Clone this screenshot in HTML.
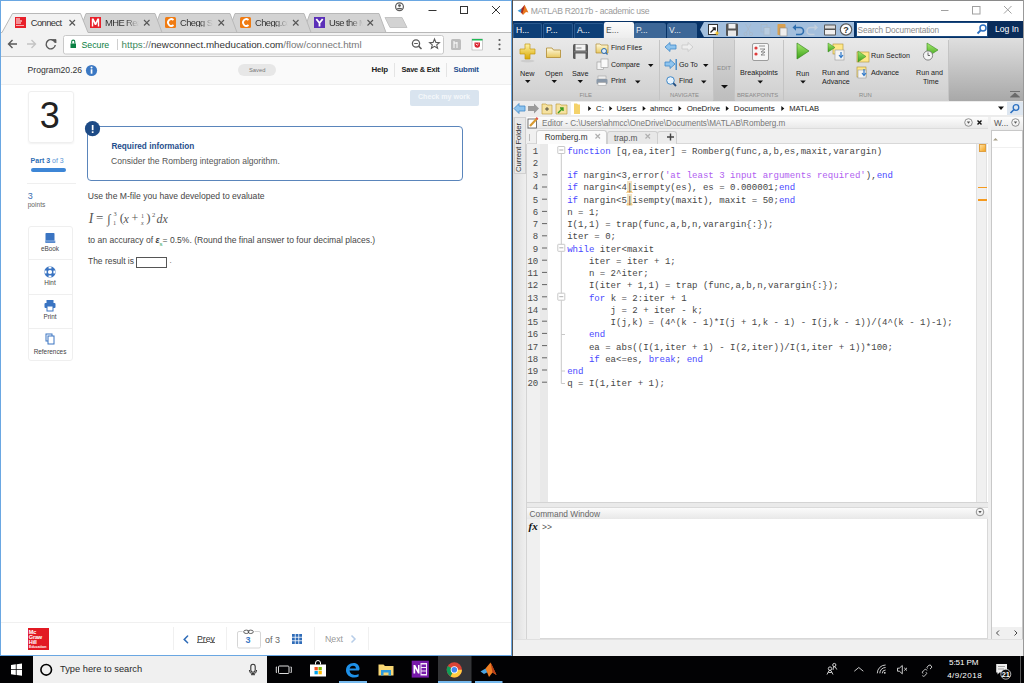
<!DOCTYPE html>
<html><head><meta charset="utf-8">
<style>
*{box-sizing:border-box}
html,body{margin:0;padding:0;width:1024px;height:683px;overflow:hidden;background:#fff;font-family:"Liberation Sans",sans-serif}
.a{position:absolute}
.t{position:absolute;white-space:nowrap;line-height:1}
.mono{font-family:"Liberation Mono",monospace}
pre.code{margin:0;font-size:9.05px;line-height:12.25px;white-space:pre}
.k{color:#4848ff}.s{color:#b060f0}
</style></head><body>
<!-- ============ CHROME ============ -->
<div id="chrome" class="a" style="left:0;top:0;width:512px;height:656px;background:#fff;overflow:hidden">
  <svg class="a" style="left:0;top:0" width="512" height="33">
    <line x1="0" y1="32.5" x2="512" y2="32.5" stroke="#c4c4c4" stroke-width="1"/>
    <path d="M386,32.5 L379,13.5 L310,13.5 L303,32.5Z" fill="#d3d3d3" stroke="#b8b8b8"/>
    <path d="M311,32.5 L304,13.5 L235,13.5 L228,32.5Z" fill="#d3d3d3" stroke="#b8b8b8"/>
    <path d="M237,32.5 L230,13.5 L160,13.5 L153,32.5Z" fill="#d3d3d3" stroke="#b8b8b8"/>
    <path d="M162,32.5 L155,13.5 L86,13.5 L79,32.5Z" fill="#d3d3d3" stroke="#b8b8b8"/>
    <path d="M0,33 L2,32.5 L12.5,13.5 L80.5,13.5 L88,32.5 L512,32.5 L512,34 L0,34Z" fill="#f2f2f2" stroke="#b8b8b8"/>
    <path d="M385,17.5 L402,17.5 L407,27.5 L390,27.5Z" fill="#d3d3d3" stroke="#c4c4c4"/>
    <!-- tab icons -->
    <rect x="15" y="17" width="11" height="11" fill="#e8202a"/>
    <g fill="#fff"><rect x="16" y="18.5" width="4" height="1"/><rect x="16" y="20.5" width="6" height="1"/><rect x="16" y="22.5" width="5" height="1"/><rect x="16" y="25" width="8" height="0.8" opacity=".8"/></g>
    <rect x="90" y="17" width="11" height="11" fill="#e8202a"/>
    <path d="M91.8,26.5 V18.5 H93.6 L95.5,22.5 L97.4,18.5 H99.2 V26.5 H97.8 V21.5 L96.2,25 H94.8 L93.2,21.5 V26.5Z" fill="#fff"/>
    <rect x="165" y="17" width="11" height="11" rx="1.5" fill="#f07b12"/>
    <path d="M173.5,20 A3.3,3.3 0 1 0 173.5,25" fill="none" stroke="#fff" stroke-width="1.8"/>
    <rect x="240" y="17" width="11" height="11" rx="1.5" fill="#f07b12"/>
    <path d="M248.5,20 A3.3,3.3 0 1 0 248.5,25" fill="none" stroke="#fff" stroke-width="1.8"/>
    <rect x="314" y="17" width="11" height="11" fill="#5b2fb8"/>
    <path d="M316.3,19 L319.5,23 V26.5 M322.7,19 L319.5,23" fill="none" stroke="#fff" stroke-width="1.8"/>
    <!-- close x's -->
    <g stroke="#555" stroke-width="1.1">
      <path d="M69.5,20 L75,25.5 M75,20 L69.5,25.5"/>
      <path d="M144,20 L149.5,25.5 M149.5,20 L144,25.5"/>
      <path d="M218.5,20 L224,25.5 M224,20 L218.5,25.5"/>
      <path d="M293,20 L298.5,25.5 M298.5,20 L293,25.5"/>
      <path d="M367.5,20 L373,25.5 M373,20 L367.5,25.5"/>
    </g>
    <!-- window controls -->
    <circle cx="399.5" cy="6.8" r="3.9" fill="none" stroke="#5a5a5a" stroke-width="1.2"/>
    <circle cx="399.5" cy="5.6" r="1.4" fill="#5a5a5a"/>
    <path d="M396.6,8.6 Q399.5,6.9 402.4,8.6 V9.3 H396.6Z" fill="#5a5a5a"/>
    <line x1="428.5" y1="10.5" x2="436.5" y2="10.5" stroke="#333" stroke-width="1"/>
    <rect x="460.5" y="6.5" width="7" height="7" fill="none" stroke="#333" stroke-width="1"/>
    <path d="M492,6 L500,14 M500,6 L492,14" stroke="#333" stroke-width="1"/>
  </svg>
  <!-- tab titles -->
  <div class="t" style="left:30.8px;top:18px;font-size:9.4px;letter-spacing:-.6px;color:#333">Connect</div>
  <div class="t" style="left:105px;top:18px;font-size:9.4px;letter-spacing:-.6px;color:#333;width:34px;overflow:hidden;-webkit-mask-image:linear-gradient(90deg,#000 60%,transparent)">MHE Rea</div>
  <div class="t" style="left:180px;top:18px;font-size:9.4px;letter-spacing:-.6px;color:#333;width:33px;overflow:hidden;-webkit-mask-image:linear-gradient(90deg,#000 60%,transparent)">Chegg St</div>
  <div class="t" style="left:255px;top:18px;font-size:9.4px;letter-spacing:-.6px;color:#333;width:33px;overflow:hidden;-webkit-mask-image:linear-gradient(90deg,#000 60%,transparent)">Chegg.com</div>
  <div class="t" style="left:329px;top:18px;font-size:9.4px;letter-spacing:-.6px;color:#333;width:34px;overflow:hidden;-webkit-mask-image:linear-gradient(90deg,#000 60%,transparent)">Use the M</div>
  <!-- toolbar -->
  <div class="a" style="left:0;top:33px;width:512px;height:24px;background:#f2f2f2;border-bottom:1px solid #cacaca"></div>
  <svg class="a" style="left:0;top:33px" width="512" height="24">
    <path d="M17,11 H9 M12.5,7 L8.5,11 L12.5,15" fill="none" stroke="#5a5a5a" stroke-width="1.4"/>
    <path d="M27,11 H35 M31.5,7 L35.5,11 L31.5,15" fill="none" stroke="#c4c4c4" stroke-width="1.4"/>
    <path d="M55,9.5 A4.6,4.6 0 1 0 55.3,12" fill="none" stroke="#5a5a5a" stroke-width="1.4"/>
    <path d="M52.5,6.5 L56,6.5 L56,10 Z" fill="#5a5a5a" stroke="#5a5a5a" stroke-width="0.8"/>
    <!-- omnibox -->
    <rect x="63.5" y="2.5" width="380" height="18.5" rx="2" fill="#fff" stroke="#c9c9c9"/>
    <rect x="70.5" y="10.5" width="5.5" height="4.5" fill="#0b8043"/>
    <path d="M71.7,10.5 V8.7 A1.55,1.55 0 0 1 74.8,8.7 V10.5" fill="none" stroke="#0b8043" stroke-width="1.1"/>
    <line x1="117.5" y1="6" x2="117.5" y2="17" stroke="#cfcfcf"/>
    <!-- zoom -->
    <circle cx="416" cy="10.5" r="3.6" fill="none" stroke="#5a5a5a" stroke-width="1.3"/>
    <path d="M418.6,13.1 L421.5,16" stroke="#5a5a5a" stroke-width="1.5"/>
    <line x1="414.2" y1="10.5" x2="417.8" y2="10.5" stroke="#5a5a5a" stroke-width="1"/>
    <!-- star -->
    <path d="M434.5,6 L435.9,9.4 L439.4,9.6 L436.7,11.9 L437.6,15.3 L434.5,13.4 L431.4,15.3 L432.3,11.9 L429.6,9.6 L433.1,9.4Z" fill="none" stroke="#5a5a5a" stroke-width="1.1"/>
    <!-- ext -->
    <rect x="451" y="6" width="10" height="11" rx="1.5" fill="#bdbdbd"/>
    <path d="M454,8 V15 M454,10 H457 M457,9 V15" stroke="#fff" stroke-width="1"/>
    <rect x="472" y="6" width="10.5" height="11" fill="#fff" stroke="#aaa" stroke-width=".6"/>
    <rect x="472" y="6" width="10.5" height="1.5" fill="#1db954"/>
    <path d="M474.5,9.5 H480 V12 A2.75,2.75 0 0 1 474.5,12Z" fill="#d9242f"/>
    <path d="M475.8,10.8 L477.25,12.2 L478.7,10.8" stroke="#fff" stroke-width=".9" fill="none"/>
    <circle cx="499.5" cy="7" r="1.1" fill="#5a5a5a"/><circle cx="499.5" cy="11.5" r="1.1" fill="#5a5a5a"/><circle cx="499.5" cy="16" r="1.1" fill="#5a5a5a"/>
  </svg>
  <div class="t" style="left:81.5px;top:40.5px;font-size:8.75px;color:#0b8043">Secure</div>
  <div class="t" style="left:121.5px;top:39.5px;font-size:9.8px;color:#333"><span style="color:#3c8a5c">https</span><span style="color:#777">://</span>newconnect.mheducation.com<span style="color:#777">/flow/connect.html</span></div>

  <!-- page header -->
  <div class="a" style="left:0;top:57px;width:512px;height:28px;background:#fafafa;border-bottom:1px solid #efefef"></div>
  <div class="t" style="left:27.5px;top:65.6px;font-size:8.65px;color:#333">Program20.26</div>
  <svg class="a" style="left:85px;top:64px" width="13" height="13"><circle cx="6.5" cy="6.5" r="5.6" fill="#3b78c3"/><rect x="5.7" y="5.3" width="1.7" height="4.4" fill="#fff"/><circle cx="6.55" cy="3.6" r="1" fill="#fff"/></svg>
  <div class="a" style="left:237.5px;top:63.8px;width:38px;height:12.5px;border-radius:6.25px;background:#e7e7e7"></div>
  <div class="t" style="left:249px;top:67.5px;font-size:5.8px;color:#777">Saved</div>
  <div class="t" style="left:371.5px;top:66.3px;font-size:7.9px;color:#222;font-weight:bold;letter-spacing:-.2px">Help</div>
  <div class="a" style="left:394px;top:63px;width:1px;height:14px;background:#e4e4e4"></div>
  <div class="t" style="left:401.5px;top:66.3px;font-size:7.4px;color:#222;font-weight:bold;letter-spacing:-.2px">Save &amp; Exit</div>
  <div class="a" style="left:446px;top:63px;width:1px;height:14px;background:#e4e4e4"></div>
  <div class="t" style="left:453.5px;top:66.3px;font-size:7.8px;color:#1f4f8f;font-weight:bold;letter-spacing:-.2px">Submit</div>
  <!-- check my work -->
  <div class="a" style="left:410px;top:89.5px;width:69px;height:16px;border-radius:2px;background:#d9e4ef"></div>
  <div class="t" style="left:418px;top:94px;font-size:7.1px;color:#f4f7fa;font-weight:bold">Check my work</div>

  <!-- question number box -->
  <div class="a" style="left:27.5px;top:90.5px;width:46px;height:52px;border:1px solid #efefef;border-radius:3px;box-shadow:0 1px 2px rgba(0,0,0,.06)"></div>
  <div class="t" style="left:39.8px;top:97.8px;font-size:36px;color:#222;font-weight:normal">3</div>
  <div class="t" style="left:30.6px;top:156.8px;font-size:7px;color:#2e6db4"><b>Part 3</b> <span style="color:#5a95d6">of 3</span></div>
  <div class="a" style="left:30.5px;top:168px;width:35.5px;height:3.5px;border-radius:2px;background:#3d86d6"></div>
  <div class="a" style="left:27px;top:183px;width:49px;height:1px;background:#efefef"></div>
  <div class="t" style="left:27.7px;top:191.5px;font-size:9px;color:#3c6fb0">3</div>
  <div class="t" style="left:27.7px;top:201.8px;font-size:6.6px;color:#666">points</div>

  <!-- tools -->
  <div class="a" style="left:27.7px;top:225.7px;width:45px;height:135.5px;border:1px solid #efefef;border-radius:3px"></div>
  <div class="a" style="left:28px;top:259px;width:44px;height:1px;background:#efefef"></div>
  <div class="a" style="left:28px;top:293.5px;width:44px;height:1px;background:#efefef"></div>
  <div class="a" style="left:28px;top:327.5px;width:44px;height:1px;background:#efefef"></div>
  <svg class="a" style="left:28px;top:226px" width="45" height="135">
    <!-- ebook -->
    <rect x="17.5" y="7" width="9" height="9.5" rx=".8" fill="#3a74c2"/>
    <rect x="17.5" y="14.5" width="10" height="2.5" fill="#9fbde6"/>
    <rect x="17.5" y="15.5" width="9.5" height="1.2" fill="#3a74c2"/>
    <!-- hint lifebuoy -->
    <circle cx="22" cy="46" r="5.7" fill="#3a74c2"/>
    <circle cx="22" cy="46" r="2.1" fill="#fff"/>
    <rect x="20.6" y="40.6" width="2.8" height="2" fill="#fff"/><rect x="20.6" y="49.4" width="2.8" height="2" fill="#fff"/>
    <rect x="16.6" y="44.6" width="2" height="2.8" fill="#fff"/><rect x="25.4" y="44.6" width="2" height="2.8" fill="#fff"/>
    <!-- print -->
    <rect x="18.5" y="74" width="7" height="3" fill="#3a74c2"/>
    <rect x="16.5" y="77" width="11" height="5" rx="1" fill="#3a74c2"/>
    <rect x="19" y="80" width="6" height="5" fill="#fff" stroke="#3a74c2" stroke-width="1"/>
    <!-- references -->
    <rect x="18" y="108" width="6" height="7" fill="#fff" stroke="#3a74c2" stroke-width="1"/>
    <rect x="20" y="110" width="6" height="8" fill="#fff" stroke="#3a74c2" stroke-width="1"/>
  </svg>
  <div class="t" style="left:28px;width:44px;text-align:center;top:246px;font-size:6.4px;color:#444">eBook</div>
  <div class="t" style="left:28px;width:44px;text-align:center;top:280px;font-size:6.4px;color:#444">Hint</div>
  <div class="t" style="left:28px;width:44px;text-align:center;top:314px;font-size:6.4px;color:#444">Print</div>
  <div class="t" style="left:28px;width:44px;text-align:center;top:348.5px;font-size:6.4px;color:#444">References</div>

  <!-- card -->
  <div class="a" style="left:87px;top:126px;width:376px;height:54.5px;border:1px solid #5a85bb;border-radius:4px"></div>
  <svg class="a" style="left:84px;top:121px" width="18" height="18"><circle cx="8.5" cy="7.7" r="7.6" fill="#1d4b86"/><rect x="7.8" y="4" width="1.7" height="5.2" fill="#fff"/><rect x="7.8" y="10.3" width="1.7" height="1.7" fill="#fff"/></svg>
  <div class="t" style="left:111.4px;top:143.2px;font-size:8.2px;color:#1f4e8c;font-weight:bold">Required information</div>
  <div class="t" style="left:111px;top:157.4px;font-size:8.58px;color:#555">Consider the Romberg integration algorithm.</div>

  <!-- body -->
  <div class="t" style="left:87.8px;top:191.5px;font-size:8.6px;color:#464646">Use the M-file you have developed to evaluate</div>
  <svg class="a" style="left:80px;top:205px" width="100" height="25" font-family="Liberation Serif" fill="#555">
    <text x="8.8" y="17.5" font-size="13.6" font-style="italic">I</text>
    <text x="16" y="17" font-size="13">=</text>
    <text x="27.3" y="17.6" font-size="12.5">&#8747;</text>
    <text x="33.4" y="11.4" font-size="6.3">3</text>
    <text x="33" y="20" font-size="6.3">1</text>
    <text x="39.8" y="17" font-size="12.8">(</text>
    <text x="43.6" y="17.6" font-size="12" font-style="italic">x</text>
    <text x="51.6" y="17" font-size="12">+</text>
    <text x="61" y="13.4" font-size="6">1</text>
    <text x="61" y="20" font-size="6" font-style="italic">x</text>
    <text x="66.3" y="17" font-size="12.8">)</text>
    <text x="72" y="11.6" font-size="6.6">2</text>
    <text x="76.6" y="17.6" font-size="12" font-style="italic">dx</text>
  </svg>
  <div class="t" style="left:88px;top:236px;font-size:8.55px;color:#464646">to an accuracy of <b><i>&epsilon;</i></b><sub style="font-size:6px;color:#3a6">s</sub>= 0.5%. (Round the final answer to four decimal places.)</div>
  <div class="t" style="left:88px;top:256.8px;font-size:8.45px;color:#464646">The result is</div>
  <div class="a" style="left:136px;top:257px;width:31px;height:10.5px;border:1px solid #555;background:#fff"></div>
  <div class="t" style="left:169.5px;top:257px;font-size:8px;color:#555">.</div>

  <!-- footer -->
  <div class="a" style="left:0;top:622px;width:512px;height:1px;background:#f0f0f0"></div>
  <div class="a" style="left:27.6px;top:628.2px;width:21.8px;height:21.7px;background:#e21a23"></div>
  <div class="t" style="left:28.8px;top:629.8px;font-size:5.6px;line-height:4.9px;color:#fff;font-weight:bold;white-space:pre;letter-spacing:-.2px">Mc
Graw
Hill</div>
  <div class="t" style="left:29px;top:646.4px;font-size:3.6px;color:#fff;font-weight:bold">Education</div>
  <div class="a" style="left:173px;top:627px;width:1px;height:23px;background:#f0f0f0"></div>
  <div class="a" style="left:225.5px;top:627px;width:1px;height:23px;background:#f0f0f0"></div>
  <div class="a" style="left:314px;top:627px;width:1px;height:23px;background:#f0f0f0"></div>
  <div class="a" style="left:367.5px;top:627px;width:1px;height:23px;background:#f0f0f0"></div>
  <svg class="a" style="left:170px;top:622px" width="200" height="34">
    <path d="M17.6,14 L14.2,17.4 L17.6,20.8" fill="none" stroke="#2f6cb8" stroke-width="1.5" stroke-linecap="round"/>
    <rect x="67.5" y="9.5" width="23" height="16.5" rx="1.5" fill="#fff" stroke="#d6d6d6"/>
    <rect x="72.5" y="8" width="12" height="3" fill="#fff"/><ellipse cx="76.3" cy="9.8" rx="2.6" ry="1.7" fill="none" stroke="#444" stroke-width=".85"/><ellipse cx="80.7" cy="9.8" rx="2.6" ry="1.7" fill="none" stroke="#444" stroke-width=".85"/>
    <g fill="#2f6cb8"><rect x="122" y="12" width="2.8" height="2.8"/><rect x="125.6" y="12" width="2.8" height="2.8"/><rect x="129.2" y="12" width="2.8" height="2.8"/><rect x="122" y="15.6" width="2.8" height="2.8"/><rect x="125.6" y="15.6" width="2.8" height="2.8"/><rect x="129.2" y="15.6" width="2.8" height="2.8"/><rect x="122" y="19.2" width="2.8" height="2.8"/><rect x="125.6" y="19.2" width="2.8" height="2.8"/><rect x="129.2" y="19.2" width="2.8" height="2.8"/></g>
    <path d="M181.5,13.5 L185,17 L181.5,20.5" fill="none" stroke="#b7cde8" stroke-width="1.5"/>
  </svg>
  <div class="t" style="left:197px;top:634.5px;font-size:8.75px;color:#333;text-decoration:underline;text-decoration-thickness:.7px;text-underline-offset:.3px;text-decoration-color:#666">Prev</div>
  <div class="t" style="left:245.5px;top:635.5px;font-size:9px;color:#3a78c4;font-weight:bold">3</div>
  <div class="t" style="left:265px;top:635.8px;font-size:9px;color:#666">of 3</div>
  <div class="t" style="left:325px;top:634.5px;font-size:8.75px;color:#999;text-decoration:underline;text-decoration-thickness:.7px;text-underline-offset:.3px;text-decoration-color:#aaa">Next</div>
</div>
<!-- chrome border -->
<div class="a" style="left:0;top:0;width:512px;height:656px;border:1px solid #6aa7e2;pointer-events:none"></div>

<!-- ============ MATLAB ============ -->
<div id="matlab" class="a" style="left:512px;top:0;width:512px;height:656px;background:#f0f0f0;overflow:hidden">
  <!-- title bar -->
  <div class="a" style="left:0;top:0;width:512px;height:21px;background:#fff;border-top:1px solid #8a8a8a"></div>
  <svg class="a" style="left:5px;top:4px" width="13" height="13">
    <path d="M0.6,6.8 L4.6,4.4 L6.4,6.4 L4,8.8Z" fill="#3f9ad8"/>
    <path d="M4.6,4.4 L7.6,0.8 L8.2,4 L6,10.8 L4,8.8Z" fill="#a8281c"/>
    <path d="M7.6,0.8 L11.4,8.6 L9,8 L6.2,10.8 L5.4,9.6 L7.2,4Z" fill="#e97a20"/>
  </svg>
  <div class="t" style="left:18.7px;top:7.3px;font-size:8.6px;color:#9a9a9a;letter-spacing:-.3px">MATLAB R2017b - academic use</div>
  <svg class="a" style="left:420px;top:0" width="92" height="21">
    <line x1="9" y1="10.5" x2="16.5" y2="10.5" stroke="#a0a0a0"/>
    <rect x="40.5" y="6.5" width="7.5" height="7.5" fill="none" stroke="#a0a0a0"/>
    <path d="M72,6 L79.5,13.5 M79.5,6 L72,13.5" stroke="#a0a0a0"/>
  </svg>

  <!-- tab strip -->
  <div class="a" style="left:0;top:21px;width:512px;height:17px;background:#073266"></div>
  <div class="a" style="left:1px;top:22.5px;width:29px;height:15.5px;background:#0d3f77;border:1px solid #2a5a90;border-bottom:0;border-radius:2px 2px 0 0"></div>
  <div class="a" style="left:31px;top:22.5px;width:30px;height:15.5px;background:#0d3f77;border:1px solid #2a5a90;border-bottom:0;border-radius:2px 2px 0 0"></div>
  <div class="a" style="left:62px;top:22.5px;width:30px;height:15.5px;background:#0d3f77;border:1px solid #2a5a90;border-bottom:0;border-radius:2px 2px 0 0"></div>
  <div class="a" style="left:92px;top:22px;width:30px;height:17px;background:linear-gradient(#fbfbfb,#ececec);border-radius:2px 2px 0 0"></div>
  <div class="a" style="left:122px;top:22.5px;width:32px;height:15.5px;background:#3d6797;border-radius:2px 2px 0 0"></div>
  <div class="a" style="left:155px;top:22.5px;width:30px;height:15.5px;background:#3d6797;border-radius:2px 2px 0 0"></div>
  <div class="t" style="left:4px;top:26px;font-size:8.5px;color:#fff">H...</div>
  <div class="t" style="left:34px;top:26px;font-size:8.5px;color:#fff">P...</div>
  <div class="t" style="left:65px;top:26px;font-size:8.5px;color:#fff">A...</div>
  <div class="t" style="left:94px;top:26px;font-size:8.5px;color:#555">E...</div>
  <div class="t" style="left:124px;top:26px;font-size:8.5px;color:#e8eef5">P...</div>
  <div class="t" style="left:157px;top:26px;font-size:8.5px;color:#e8eef5">V...</div>
  <!-- quick access -->
  <svg class="a" style="left:185px;top:21px" width="160" height="17">
    <path d="M7,1 L157,1 L157,16 L7,16 L3,8.5Z" fill="#a3bfdd"/>
    <!-- icons -->
    <rect x="11.5" y="3.5" width="9" height="10" fill="#fff" stroke="#333" stroke-width="1"/>
    <path d="M13.5,11.5 L18,7 M15.5,6.8 H18.2 V9.5" stroke="#222" stroke-width="1.3" fill="none"/>
    <path d="M20,9.5 L21,11.5 L23,12 L21,12.8 L20,15 L19,12.8 L17,12 L19,11.5Z" fill="#f4c430"/>
    <rect x="29" y="2.5" width="12" height="12.5" rx="1.2" fill="#555"/><rect x="31.5" y="3" width="7" height="4.5" fill="#f0f0f0"/><rect x="31" y="9.5" width="8" height="5.5" fill="#e8e8e8"/>
    <path d="M48.5,3 L53.5,12 M54,3 L49,12" stroke="#a8b8c8" stroke-width=".8" fill="none"/><circle cx="48.5" cy="13" r="1.6" fill="none" stroke="#a8b8c8" stroke-width=".8"/><circle cx="54" cy="13" r="1.6" fill="none" stroke="#a8b8c8" stroke-width=".8"/>
    <rect x="64" y="3.5" width="6" height="7.5" fill="none" stroke="#a8b8c8" stroke-width=".8"/><rect x="67" y="6.5" width="6" height="7.5" fill="#b8cce0" stroke="#a8b8c8" stroke-width=".8"/>
    <rect x="80.5" y="3" width="8" height="11" rx=".8" fill="#d8a050"/><rect x="83" y="7" width="7" height="8" fill="#eee" stroke="#888" stroke-width=".6"/>
    <path d="M97.5,6.5 H103 A3.5,3.5 0 0 1 103,13.5 H99" fill="none" stroke="#2f6faf" stroke-width="1.6"/><path d="M95.5,6.5 L99,3.3 V9.7Z" fill="#2f6faf"/>
    <path d="M119,6.5 H113.5 A3.5,3.5 0 0 0 113.5,13.5 H117.5" fill="none" stroke="#c3cfdc" stroke-width="1.6"/><path d="M121,6.5 L117.5,3.3 V9.7Z" fill="#c3cfdc"/>
    <rect x="127" y="3.5" width="12" height="11" rx="1" fill="#555"/><rect x="128" y="4.5" width="10" height="3" fill="#ddd"/><rect x="128" y="9" width="10" height="4.5" fill="#f0f0f0"/>
    <circle cx="149" cy="8.5" r="6.2" fill="#555"/><circle cx="149" cy="8.5" r="5.1" fill="#fff"/>
    <text x="149" y="12" font-family="Liberation Sans" font-size="9" font-weight="bold" text-anchor="middle" fill="#333">?</text>
  </svg>
  <!-- search -->
  <div class="a" style="left:344px;top:22px;width:132px;height:14.5px;background:#fff;border:1px solid #1a4a80"></div>
  <div class="t" style="left:345.6px;top:25.6px;font-size:8.3px;color:#8a8a8a;letter-spacing:-.15px">Search Documentation</div>
  <svg class="a" style="left:464px;top:23px" width="12" height="12"><circle cx="7" cy="5" r="3" fill="none" stroke="#2a6fc0" stroke-width="1.5"/><path d="M5,7 L1.5,10.5" stroke="#2a6fc0" stroke-width="1.8"/></svg>
  <div class="a" style="left:476px;top:21px;width:36px;height:17px;background:#092c5a"></div>
  <div class="t" style="left:483px;top:25px;font-size:8.6px;color:#fff">Log In</div>

  <!-- ribbon -->
  <div class="a" style="left:0;top:38px;width:512px;height:51.5px;background:linear-gradient(#e9e9e9,#d3d3d3)"></div>
  <div class="a" style="left:0;top:89.5px;width:512px;height:11px;background:linear-gradient(#d6d6d6,#cdcdcd)"></div>
  <div class="a" style="left:201px;top:38px;width:21.5px;height:62.5px;background:linear-gradient(#d8d8d8,#bdbdbd)"></div>
  <div class="a" style="left:436.5px;top:38px;width:76px;height:62.5px;background:linear-gradient(#dfdfdf,#a8a8a8)"></div>
  <div class="a" style="left:147px;top:40px;width:1px;height:60px;background:#c4c4c4"></div>
  <div class="a" style="left:200.5px;top:40px;width:1px;height:60px;background:#c4c4c4"></div>
  <div class="a" style="left:222px;top:40px;width:1px;height:60px;background:#c4c4c4"></div>
  <div class="a" style="left:270.5px;top:40px;width:1px;height:60px;background:#c4c4c4"></div>
  <div class="a" style="left:436px;top:40px;width:1px;height:60px;background:#c4c4c4"></div>
  <div class="a" style="left:0;top:100.5px;width:512px;height:1px;background:#bdbdbd"></div>
  <svg class="a" style="left:0;top:38px" width="512" height="63">
    <defs>
      <linearGradient id="gy" x1="0" y1="0" x2="0" y2="1"><stop offset="0" stop-color="#fff3a8"/><stop offset="1" stop-color="#d9a800"/></linearGradient>
      <linearGradient id="gf" x1="0" y1="0" x2="0" y2="1"><stop offset="0" stop-color="#fffbe0"/><stop offset="1" stop-color="#e8c860"/></linearGradient>
      <linearGradient id="gg" x1="0" y1="0" x2="0" y2="1"><stop offset="0" stop-color="#a8ec70"/><stop offset="1" stop-color="#3aa018"/></linearGradient>
    </defs>
    <!-- New -->
    <path d="M13,6 H18 V11 H23 V16 H18 V21 H13 V16 H8 V11 H13Z" fill="url(#gy)" stroke="#c49a10" stroke-width=".7"/>
    <ellipse cx="15.5" cy="23" rx="7" ry="1.5" fill="#000" opacity=".08"/>
    <!-- Open -->
    <path d="M34.5,10 H40 L41.5,12 H48.5 V19.5 H34.5Z" fill="url(#gf)" stroke="#b08a30" stroke-width=".8"/>
    <!-- Save -->
    <rect x="61" y="6" width="15" height="15" rx="1.5" fill="#5a5a5a"/>
    <rect x="63.5" y="6.5" width="10" height="6" fill="#f4f4f4"/>
    <rect x="64.5" y="9.5" width="5" height="1" fill="#888"/>
    <rect x="63.5" y="15.5" width="10" height="5.5" fill="#e4e4e4"/>
    <rect x="62" y="13" width="13" height="1.5" fill="#777"/>
    <!-- find files -->
    <path d="M84,6 H88 L89,7 H96 V15 H84Z" fill="url(#gf)" stroke="#b08a30" stroke-width=".7"/>
    <circle cx="92" cy="13" r="2.5" fill="#dfeefc" stroke="#2a6ab0" stroke-width="1"/><path d="M93.7,14.7 L95.5,16.5" stroke="#2a6ab0" stroke-width="1.2"/>
    <!-- compare -->
    <rect x="85" y="24" width="6.5" height="7.5" fill="#f4f4f4" stroke="#999" stroke-width=".6"/>
    <rect x="89" y="21" width="7" height="8.5" fill="#fafafa" stroke="#999" stroke-width=".6"/>
    <!-- print -->
    <rect x="86" y="38" width="8" height="3" fill="#eee" stroke="#999" stroke-width=".5"/>
    <rect x="84.5" y="41" width="11" height="5" rx="1" fill="#8a98a8"/>
    <rect x="86" y="44.5" width="8" height="3" fill="#fafafa" stroke="#999" stroke-width=".5"/>
    <!-- triangles -->
    <g fill="#111">
      <path d="M13,42 H18.5 L15.75,45Z"/><path d="M39.5,42 H45 L42.25,45Z"/><path d="M65.5,42 H71 L68.25,45Z"/>
      <path d="M136,26 H141.5 L138.75,29Z"/><path d="M123,42.5 H128.5 L125.75,45.5Z"/>
      <path d="M191,26 H196.5 L193.75,29Z"/><path d="M189,42.5 H194.5 L191.75,45.5Z"/>
      <path d="M209,47 H216 L212.5,50.5Z"/>
      <path d="M245.5,42.5 H251 L248.25,45.5Z"/>
      <path d="M288.25,42.5 H293.75 L291,45.5Z"/>
    </g>
    <!-- nav arrows -->
    <path d="M153,9 L158,4.5 V7 H164 V11 H158 V13.5Z" fill="#8ec4ee" stroke="#3f88c8" stroke-width=".8"/>
    <path d="M181,9 L176,4.5 V7 H170 V11 H176 V13.5Z" fill="#eee" stroke="#c8c8c8" stroke-width=".8"/>
    <path d="M163,26 L158,21.5 V24 H153 V28 H158 V30.5Z" fill="#8ec4ee" stroke="#3f88c8" stroke-width=".8"/>
    <rect x="163.5" y="21" width="1.4" height="11" fill="#3f88c8"/>
    <circle cx="158.5" cy="42.5" r="3.8" fill="#e8f3fc" stroke="#3f88c8" stroke-width="1"/><path d="M161.2,45.2 L164,48" stroke="#234e80" stroke-width="1.8"/>
    <!-- breakpoints -->
    <rect x="240.5" y="5.5" width="16" height="17" rx="1.5" fill="#f6f6f6" stroke="#888" stroke-width=".8"/>
    <circle cx="244" cy="10" r="1.6" fill="#e03a3a"/><circle cx="244" cy="16" r="1.6" fill="#e03a3a"/>
    <path d="M247,8 H253 M248,11 H253 L249,14 H253 L249,17 H253" stroke="#666" stroke-width=".7" fill="none"/>
    <!-- run -->
    <path d="M285,5 L297,13 L285,21Z" fill="url(#gg)" stroke="#3a8a20" stroke-width=".7"/>
    <!-- run and advance -->
    <rect x="321" y="6" width="10" height="10" fill="#ffe88a" stroke="#b09030" stroke-width=".6"/>
    <rect x="323" y="12" width="9" height="10" fill="#f4f4f4" stroke="#999" stroke-width=".6"/>
    <path d="M316,5 L323,9.5 L316,14Z" fill="url(#gg)" stroke="#3a8a20" stroke-width=".5"/>
    <path d="M329,14 V19 M327,17 L329,19.5 L331,17" stroke="#2f78c8" stroke-width="1.2" fill="none"/>
    <!-- run section -->
    <rect x="345" y="14" width="12" height="10" fill="#ffe88a" stroke="#b09030" stroke-width=".6"/>
    <path d="M346,13 L354,18.5 L346,24Z" fill="url(#gg)" stroke="#3a8a20" stroke-width=".5"/>
    <!-- advance -->
    <rect x="345" y="29" width="9" height="10" fill="#ffe88a" stroke="#b09030" stroke-width=".6"/>
    <rect x="346" y="32" width="8" height="8" fill="#f4f4f4" stroke="#999" stroke-width=".6"/>
    <path d="M352,31 V37 M350,35 L352,37.5 L354,35" stroke="#2f78c8" stroke-width="1.2" fill="none"/>
    <!-- run and time -->
    <path d="M415,5 L426,12 L415,19Z" fill="url(#gg)" stroke="#3a8a20" stroke-width=".6"/>
    <circle cx="416" cy="17.5" r="4.6" fill="#f4f4f4" stroke="#777" stroke-width=".9"/>
    <path d="M416,14.5 V17.5 H418" stroke="#333" stroke-width=".7" fill="none"/>
    <!-- collapse -->
    <path d="M498,53.5 H508 M498.5,59 L503,55 L507.5,59Z" stroke="#6a6a6a" fill="#6a6a6a" stroke-width=".9"/>
  </svg>
  <div class="t" style="left:8px;top:69.5px;font-size:7.25px;color:#222">New</div>
  <div class="t" style="left:33px;top:69.5px;font-size:7.25px;color:#222">Open</div>
  <div class="t" style="left:60px;top:69.5px;font-size:7.25px;color:#222">Save</div>
  <div class="t" style="left:99px;top:45.2px;font-size:7.15px;color:#222">Find Files</div>
  <div class="t" style="left:99px;top:60.8px;font-size:7.05px;color:#222">Compare</div>
  <div class="t" style="left:99px;top:77.3px;font-size:7.2px;color:#222">Print</div>
  <div class="t" style="left:167px;top:61.8px;font-size:7.1px;color:#222">Go To</div>
  <div class="t" style="left:167px;top:78.2px;font-size:7.1px;color:#222">Find</div>
  <div class="t" style="left:205px;top:65px;font-size:6.2px;color:#8a8a8a">EDIT</div>
  <div class="t" style="left:228px;top:69px;font-size:7.2px;color:#222">Breakpoints</div>
  <div class="t" style="left:284px;top:70px;font-size:7.2px;color:#222">Run</div>
  <div class="t" style="left:310px;top:70px;font-size:7.15px;color:#222">Run and</div>
  <div class="t" style="left:310px;top:78.5px;font-size:7.15px;color:#222">Advance</div>
  <div class="t" style="left:359px;top:52.8px;font-size:7.15px;color:#222">Run Section</div>
  <div class="t" style="left:359px;top:69.3px;font-size:7.2px;color:#222">Advance</div>
  <div class="t" style="left:404px;top:70px;font-size:7.15px;color:#222">Run and</div>
  <div class="t" style="left:411px;top:78.5px;font-size:7.15px;color:#222">Time</div>
  <div class="t" style="left:67.5px;top:93px;font-size:5.9px;color:#8a8a8a">FILE</div>
  <div class="t" style="left:158px;top:93px;font-size:5.9px;color:#8a8a8a">NAVIGATE</div>
  <div class="t" style="left:225px;top:93px;font-size:5.8px;color:#8a8a8a">BREAKPOINTS</div>
  <div class="t" style="left:347px;top:93px;font-size:5.9px;color:#8a8a8a">RUN</div>

  <!-- path bar -->
  <div class="a" style="left:0;top:101px;width:512px;height:15.5px;background:#ececec"></div>
  <div class="a" style="left:58.5px;top:101.5px;width:436px;height:13.5px;background:#fff"></div>
  <div class="a" style="left:494.5px;top:101.5px;width:16px;height:13.5px;background:#dde6f0"></div>
  <svg class="a" style="left:0;top:101px" width="512" height="16">
    <path d="M2,7.5 L7,2.5 V5 H13 V10 H7 V12.5Z" fill="#8ec4ee" stroke="#3f88c8" stroke-width=".8"/>
    <path d="M27,7.5 L22,2.5 V5 H16 V10 H22 V12.5Z" fill="#9a9a9a"/>
    <path d="M30,3 H34 L35,4 H40 V13 H30Z" fill="#f6e2a0" stroke="#b8962e" stroke-width=".6"/><path d="M33,8 H37 M35,6 V10" stroke="#333" stroke-width=".8"/>
    <path d="M44,3 H48 L49,4 H55 V13 H44Z" fill="#f6e2a0" stroke="#b8962e" stroke-width=".6"/><path d="M46,12 L51,7 M48,7 H51 V10" stroke="#3a9a20" stroke-width="1.4" fill="none"/>
    <path d="M62,2.5 H65 L66,3.5 H68 V13 H62Z" fill="#f4d26a"/>
    <g fill="#111"><path d="M76.2,5 L79.2,7.5 L76.2,10Z"/><path d="M97.3,5 L100.3,7.5 L97.3,10Z"/><path d="M130.7,5 L133.7,7.5 L130.7,10Z"/><path d="M166.5,5 L169.5,7.5 L166.5,10Z"/><path d="M213.9,5 L216.9,7.5 L213.9,10Z"/><path d="M269.3,5 L272.3,7.5 L269.3,10Z"/>
    <path d="M486,5.5 H492 L489,9Z"/></g>
    <circle cx="504" cy="6.5" r="2.8" fill="none" stroke="#2a6fc0" stroke-width="1.3"/><path d="M502,8.5 L498.5,12" stroke="#2a6fc0" stroke-width="1.6"/>
  </svg>
  <div class="t" style="left:84px;top:104.5px;font-size:7.8px;color:#222">C:</div>
  <div class="t" style="left:104.5px;top:104.5px;font-size:7.65px;color:#222">Users</div>
  <div class="t" style="left:138px;top:104.5px;font-size:7.65px;color:#222">ahmcc</div>
  <div class="t" style="left:174.7px;top:104.5px;font-size:7.9px;color:#222">OneDrive</div>
  <div class="t" style="left:221.8px;top:104.5px;font-size:8.1px;color:#222">Documents</div>
  <div class="t" style="left:277.2px;top:104.5px;font-size:7.6px;color:#222">MATLAB</div>

  <!-- left sidebar -->
  <div class="a" style="left:0;top:116.5px;width:15px;height:523px;background:linear-gradient(90deg,#dcdcdc,#f0f0f0)"></div>
  <div class="a" style="left:2px;top:116.5px;width:12px;height:57px;background:#e8e8e8;border:1px solid #d0d0d0"></div>
  <div class="t" style="left:3px;top:172px;font-size:7.6px;color:#333;transform-origin:0 0;transform:rotate(-90deg)">Current Folder</div>

  <!-- editor -->
  <div class="a" style="left:14.5px;top:116.5px;width:461.5px;height:12.5px;background:linear-gradient(#fdfdfd,#e9e9e9);border-bottom:1px solid #dcdcdc"></div>
  <svg class="a" style="left:15px;top:117px" width="12" height="12">
    <rect x="1" y="2" width="8.5" height="9" fill="#fff" stroke="#555" stroke-width=".8"/>
    <path d="M3,9 L10,1.5" stroke="#d89a30" stroke-width="2.2"/><path d="M9.4,2.1 L10.6,0.9" stroke="#e05050" stroke-width="2.2"/>
  </svg>
  <div class="t" style="left:30px;top:120px;font-size:8.15px;color:#777;letter-spacing:-.03px">Editor - C:\Users\ahmcc\OneDrive\Documents\MATLAB\Romberg.m</div>
  <svg class="a" style="left:450px;top:117px" width="30" height="12">
    <circle cx="6.5" cy="5.5" r="3.8" fill="none" stroke="#777" stroke-width=".8"/><path d="M4.8,4.5 H8.2 L6.5,6.8Z" fill="#555"/>
    <path d="M15.5,3.5 L19.5,7.5 M19.5,3.5 L15.5,7.5" stroke="#111" stroke-width="1.4"/>
  </svg>
  <!-- tabs -->
  <div class="a" style="left:14.5px;top:129px;width:461.5px;height:15px;background:#f0f0f0;border-bottom:1px solid #d8d8d8"></div>
  <div class="a" style="left:24px;top:130px;width:71px;height:14.5px;background:#fbfbfb;border:1px solid #cfcfcf;border-bottom:0;border-radius:3px 3px 0 0"></div>
  <div class="a" style="left:95px;top:131px;width:51px;height:13px;background:#e8e8e8;border:1px solid #cfcfcf;border-bottom:0;border-radius:3px 3px 0 0"></div>
  <div class="a" style="left:145px;top:131px;width:19.5px;height:13px;background:#ececec;border:1px solid #cfcfcf;border-bottom:0;border-radius:3px 3px 0 0"></div>
  <div class="a" style="left:17px;top:134px;width:1px;height:7px;background:#bbb"></div>
  <div class="t" style="left:32.7px;top:134px;font-size:8.2px;color:#333">Romberg.m</div>
  <div class="t" style="left:101.9px;top:134px;font-size:8.3px;color:#555">trap.m</div>
  <svg class="a" style="left:80px;top:131px" width="90" height="13">
    <path d="M3.5,3 L8,7.5 M8,3 L3.5,7.5" stroke="#b0b0b0" stroke-width="1.2"/>
    <path d="M53.5,3 L58,7.5 M58,3 L53.5,7.5" stroke="#b0b0b0" stroke-width="1.2"/>
    <path d="M75,6 H82 M78.5,2.5 V9.5" stroke="#444" stroke-width="1.4"/>
  </svg>
  <!-- code area -->
  <div class="a" style="left:14.5px;top:144px;width:461.5px;height:358.5px;background:#fff;border-bottom:1px solid #d8d8d8"></div>
  <div class="a" style="left:15px;top:144px;width:13px;height:358px;background:#f0f0f0"></div>
  <div class="a" style="left:28px;top:144px;width:8px;height:358px;background:#e9e9e9"></div>
  <div class="a" style="left:463.5px;top:144px;width:11.5px;height:358px;background:#f0f0f0;border-left:1px solid #e2e2e2;border-right:1px solid #e2e2e2"></div>
  <div class="a" style="left:467px;top:144px;width:7px;height:7.5px;background:linear-gradient(135deg,#ffe0a0,#f5a623);border:1px solid #e0a040"></div>
  <div class="a" style="left:466px;top:186.5px;width:9px;height:1.5px;background:#f59a1e"></div>
  <div class="a" style="left:466px;top:199px;width:9px;height:1.5px;background:#f59a1e"></div>
  <!-- code -->
  <div class="a" style="left:115px;top:181.3px;width:4.5px;height:12px;background:#f3e3c3"></div>
  <div class="a" style="left:115px;top:193.5px;width:4.5px;height:12px;background:#f3e3c3"></div>
  <svg class="a" style="left:114px;top:190px" width="7" height="20"><path d="M0.5,2.5 l1.5,-1 l1.5,1 l1.5,-1 l1.5,1 M0.5,14.7 l1.5,-1 l1.5,1 l1.5,-1 l1.5,1" stroke="#f0a030" stroke-width=".8" fill="none"/></svg>
  <pre class="a mono code" style="left:0px;top:145.6px;width:26.3px;text-align:right;color:#4a4a4a"> 1
 2
 3
 4
 5
 6
 7
 8
 9
10
11
12
13
14
15
16
17
18
19
20</pre>
  <pre class="a mono code" style="left:55.2px;top:145.6px;color:#474747"><span class="k">function</span> [q,ea,iter] = Romberg(func,a,b,es,maxit,varargin)

<span class="k">if</span> nargin&lt;3,error(<span class="s">&#x27;at least 3 input arguments required&#x27;</span>),<span class="k">end</span>
<span class="k">if</span> nargin&lt;4|isempty(es), es = 0.000001;<span class="k">end</span>
<span class="k">if</span> nargin&lt;5|isempty(maxit), maxit = 50;<span class="k">end</span>
n = 1;
I(1,1) = trap(func,a,b,n,varargin{:});
iter = 0;
<span class="k">while</span> iter&lt;maxit
    iter = iter + 1;
    n = 2^iter;
    I(iter + 1,1) = trap (func,a,b,n,varargin{:});
    <span class="k">for</span> k = 2:iter + 1
        j = 2 + iter - k;
        I(j,k) = (4^(k - 1)*I(j + 1,k - 1) - I(j,k - 1))/(4^(k - 1)-1);
    <span class="k">end</span>
    ea = abs((I(1,iter + 1) - I(2,iter))/I(1,iter + 1))*100;
    <span class="k">if</span> ea&lt;=es, <span class="k">break</span>; <span class="k">end</span>
<span class="k">end</span>
q = I(1,iter + 1);</pre>
  <svg class="a" style="left:28px;top:144px" width="40" height="250">
    <g stroke="#555" stroke-width=".9"><path d="M2,30.8 H7"/><path d="M2,43 H7"/><path d="M2,55.2 H7"/><path d="M2,67.4 H7"/><path d="M2,79.6 H7"/><path d="M2,91.8 H7"/><path d="M2,104 H7"/><path d="M2,116.2 H7"/><path d="M2,128.4 H7"/><path d="M2,140.6 H7"/><path d="M2,152.8 H7"/><path d="M2,165 H7"/><path d="M2,177.2 H7"/><path d="M2,189.4 H7"/><path d="M2,201.6 H7"/><path d="M2,213.8 H7"/><path d="M2,226 H7"/><path d="M2,238.2 H7"/></g>
    <g stroke="#c8c8c8" stroke-width="1" fill="#fff">
      <path d="M21.3,9.5 V239.5 H25" fill="none"/>
      <path d="M21.3,190.5 H25" fill="none"/><path d="M21.3,227 H25" fill="none"/>
      <rect x="17.8" y="2.5" width="7" height="7" rx=".5"/>
      <rect x="17.8" y="100.3" width="7" height="7" rx=".5"/>
      <rect x="17.8" y="149.2" width="7" height="7" rx=".5"/>
    </g>
    <g stroke="#999" stroke-width=".8"><path d="M19.3,6 H23.3"/><path d="M19.3,103.8 H23.3"/><path d="M19.3,152.7 H23.3"/></g>
  </svg>
  <!-- command window -->
  <div class="a" style="left:14.5px;top:502.5px;width:461px;height:4px;background:#eaeaea"></div>
  <div class="a" style="left:14.5px;top:506.5px;width:461px;height:12px;background:linear-gradient(#fbfbfb,#e8e8e8);border-top:1px solid #dadada"></div>
  <div class="t" style="left:17.5px;top:509.5px;font-size:8.35px;color:#666">Command Window</div>
  <svg class="a" style="left:462px;top:506px" width="12" height="12"><circle cx="6" cy="6" r="3.8" fill="none" stroke="#777" stroke-width=".8"/><path d="M4.3,5 H7.7 L6,7.3Z" fill="#555"/></svg>
  <div class="a" style="left:14.5px;top:518.5px;width:461px;height:120.5px;background:#fff;border-right:1px solid #d8d8d8;border-bottom:1px solid #d8d8d8"></div>
  <div class="a" style="left:15px;top:518.5px;width:12.5px;height:120px;background:#f0f0f0"></div>
  <div class="t" style="left:16.5px;top:520.5px;font-size:11px;color:#111;font-family:'Liberation Serif',serif;font-style:italic;font-weight:bold">fx</div>
  <div class="t" style="left:30px;top:523.3px;font-size:8.5px;color:#555">&gt;&gt;</div>

  <!-- workspace -->
  <div class="a" style="left:478px;top:116.5px;width:32px;height:523px;background:#f0f0f0"></div>
  <div class="a" style="left:478.5px;top:117px;width:32px;height:12.5px;background:linear-gradient(#fdfdfd,#e9e9e9)"></div>
  <div class="t" style="left:482px;top:119.3px;font-size:8.3px;color:#555">W...</div>
  <svg class="a" style="left:497px;top:117px" width="12" height="12"><circle cx="6.5" cy="5.5" r="3.8" fill="none" stroke="#777" stroke-width=".8"/><path d="M4.8,4.5 H8.2 L6.5,6.8Z" fill="#555"/></svg>
  <div class="a" style="left:478.5px;top:129.5px;width:32px;height:509.5px;background:#fff;border:1px solid #c8c8c8"></div>
  <div class="a" style="left:479.5px;top:147px;width:30px;height:1px;background:#f0f0f0"></div>
  <svg class="a" style="left:480px;top:136px" width="8" height="6"><path d="M1,4.5 L3.5,2 L6,4.5Z" fill="#a8a08a"/></svg>
  <div class="a" style="left:479.5px;top:627px;width:30px;height:11.5px;background:#f0f0f0"></div>
  <svg class="a" style="left:479.5px;top:627px" width="30" height="12"><path d="M7,3.5 L4.5,6 L7,8.5 M22.5,3.5 L25,6 L22.5,8.5" stroke="#444" stroke-width="1" fill="none"/></svg>

  <div class="a" style="left:14px;top:144px;width:1px;height:495px;background:#d4d4d4"></div>
  <div class="a" style="left:14.5px;top:502px;width:461.5px;height:1px;background:#d4d4d4"></div>
  <!-- status bar -->
  <div class="a" style="left:0;top:639px;width:512px;height:17px;background:#f0f0f0;border-top:1px solid #e0e0e0"></div>
  <!-- borders -->
  <div class="a" style="left:0;top:0;width:1px;height:656px;background:#505050"></div>
  <div class="a" style="left:510.5px;top:0;width:1.5px;height:656px;background:#999"></div>
</div>

<!-- ============ TASKBAR ============ -->
<div id="taskbar" class="a" style="left:0;top:656px;width:1024px;height:27px;background:#020204;overflow:hidden">
  <div class="a" style="left:33px;top:0;width:234px;height:27px;background:#f0f0f0"></div>
  <svg class="a" style="left:0;top:0" width="1024" height="27">
    <!-- windows logo -->
    <path d="M11,9 L15.8,8.3 V13.2 H11Z M16.6,8.2 L22,7.4 V13.2 H16.6Z M11,14 H15.8 V18.9 L11,18.2Z M16.6,14 H22 V19.8 L16.6,19Z" fill="#fff"/>
    <!-- cortana circle -->
    <circle cx="46.2" cy="13.8" r="5.3" fill="none" stroke="#000" stroke-width="1.6"/>
    <!-- mic -->
    <rect x="250.8" y="8.3" width="4.4" height="8" rx="2.2" fill="none" stroke="#333" stroke-width="1.1"/>
    <path d="M249.3,14 A3.7,3.7 0 0 0 256.7,14 M253,17.7 V18.5 M251,18.7 H255" fill="none" stroke="#333" stroke-width="1"/>
    <!-- task view -->
    <rect x="278.5" y="10" width="10.5" height="7.5" rx="1" fill="none" stroke="#ddd" stroke-width="1"/>
    <path d="M277,11 H276.3 V16.5 H277 M290.5,11 H291.3 V16.5 H290.5" fill="none" stroke="#ddd" stroke-width="1"/>
    <!-- store -->
    <path d="M310,8.5 H326 V20.5 H310Z" fill="#fff"/>
    <path d="M315.5,8.5 V7 A2.5,2.5 0 0 1 320.5,7 V8.5" fill="none" stroke="#fff" stroke-width="1"/>
    <rect x="314.5" y="11" width="3.3" height="3.3" fill="#f25022"/><rect x="318.5" y="11" width="3.3" height="3.3" fill="#7fba00"/>
    <rect x="314.5" y="15" width="3.3" height="3.3" fill="#00a4ef"/><rect x="318.5" y="15" width="3.3" height="3.3" fill="#ffb900"/>
    <!-- edge -->
    <path d="M358.8,14.6 H349.5 C349.7,17.4 352,19 354.8,19 C356.3,19 357.6,18.6 358.6,18 V20.6 C357.4,21.2 355.8,21.5 354.2,21.5 C349.3,21.5 346,18.3 346,14.2 C346,10 349.3,7 353.6,7 C357.3,7 359.6,9.6 359.6,13.2Z M349.6,12.6 H356 C355.9,10.8 355,9.7 353,9.7 C351.3,9.7 350,10.9 349.6,12.6Z" fill="#1e90e8"/>
    <rect x="339" y="25" width="28" height="2" fill="#76b9ed"/>
    <!-- explorer -->
    <path d="M378.5,8.5 H383.5 L385,10 H393.5 V19.5 H378.5Z" fill="#f8d775"/>
    <path d="M381,14 H391 V19.5 H388.5 V16.5 H383.5 V19.5 H381Z" fill="#2d9bdf"/>
    <!-- onenote -->
    <rect x="411.7" y="4.7" width="17.1" height="16.9" fill="#7719aa"/>
    <rect x="420.5" y="7" width="6.5" height="12.5" fill="#fff" opacity=".9"/>
    <rect x="421.5" y="8.5" width="4.5" height="2.5" fill="#7719aa"/><rect x="421.5" y="12" width="4.5" height="2.5" fill="#7719aa"/><rect x="421.5" y="15.5" width="4.5" height="2.5" fill="#7719aa"/>
    <path d="M413.5,17.5 V9 H415.2 L418,14 V9 H419.5 V17.5 H418 L415.2,12.5 V17.5Z" fill="#fff"/>
    <!-- chrome -->
    <rect x="438" y="0" width="33.5" height="27" fill="#333437"/>
    <rect x="438" y="25" width="33.5" height="2" fill="#76b9ed"/>
    <circle cx="454.3" cy="13.8" r="7.6" fill="#db4437"/>
    <path d="M454.3,13.8 L447.72,10 A7.6,7.6 0 0 0 450.5,20.38Z" fill="#0f9d58"/>
    <path d="M454.3,13.8 L450.5,20.38 A7.6,7.6 0 0 0 461.9,13.8Z" fill="#ffcd40"/>
    <circle cx="454.3" cy="13.8" r="3.6" fill="#fff"/>
    <circle cx="454.3" cy="13.8" r="2.8" fill="#4285f4"/>
    <!-- matlab -->
    <path d="M480.5,15.5 L485.5,12.5 L488,16 L484,18Z" fill="#4aa3df"/>
    <path d="M485.5,12.5 L490.5,6.5 L496.5,19 L492.5,16.5 L489,21Z" fill="#ef7e22"/>
    <path d="M490.5,6.5 L492.5,10 L496.5,19 L492.5,16.5Z" fill="#b8401a"/>
    <rect x="475" y="25" width="27.5" height="2" fill="#76b9ed"/>
    <!-- tray -->
    <g fill="none" stroke="#e0e0e0" stroke-width="0.9">
      <circle cx="830" cy="12.6" r="1.7"/><path d="M827,18.5 L829,14.6 H831 L833,18.5 M828.3,16.5 H831.7"/>
      <circle cx="834.3" cy="9" r="1.6"/><path d="M833,14 L833.5,10.8 H835.2 L836.8,13.5"/>
      <path d="M854.3,15.2 L858.8,11.5 L863.3,15.2"/>
      <path d="M877.3,17.3 A8.3,8.3 0 0 1 885.6,9 M879.8,17.3 A5.8,5.8 0 0 1 885.6,11.5 M882.3,17.3 A3.3,3.3 0 0 1 885.6,14"/>
      <path d="M897.5,12.2 H899.3 L902.3,9.5 V17.8 L899.3,15.2 H897.5Z"/>
      <path d="M904.2,11.8 L907,14.6 M907,11.8 L904.2,14.6"/>
      <path d="M923,17.5 A1.6,1.6 0 0 1 923.2,15 L924.5,13.8 A1.6,1.6 0 0 1 926.8,14 L927,14.3 M926,16.2 A1.6,1.6 0 0 1 925.8,18.7 L924.6,19.8 A1.6,1.6 0 0 1 922.3,19.6"/>
      <path d="M927.5,12.5 A1.5,1.5 0 0 1 927.8,10.2 L929,9.3 A1.5,1.5 0 0 1 931,9.6 L931.3,10 A1.5,1.5 0 0 1 931,12.2 L930,13"/>
    </g>
    <circle cx="884.8" cy="16.8" r=".9" fill="#e0e0e0"/>
    <path d="M996.2,8 H1007 V16.5 H999.5 L997.5,18.5 V16.5 H996.2Z" fill="#eee"/>
    <path d="M998,10.5 H1005 M998,13 H1004" stroke="#999" stroke-width=".9"/>
    <circle cx="1005.8" cy="18.2" r="5" fill="#111" stroke="#ddd" stroke-width=".8"/>
    <text x="1005.8" y="20.9" font-family="Liberation Sans" font-size="7.4" font-weight="bold" text-anchor="middle" fill="#fff">21</text>
    <rect x="1020" y="0" width="1" height="27" fill="#555"/>
  </svg>
  <div class="t" style="left:60px;top:9px;font-size:9.3px;color:#2a2a2a">Type here to search</div>
  <div class="t" style="left:949px;top:3.2px;font-size:8.1px;color:#fff;letter-spacing:-.1px">5:51 PM</div>
  <div class="t" style="left:947.2px;top:15.5px;font-size:8.1px;color:#fff;letter-spacing:.42px">4/9/2018</div>
</div>
</body></html>
